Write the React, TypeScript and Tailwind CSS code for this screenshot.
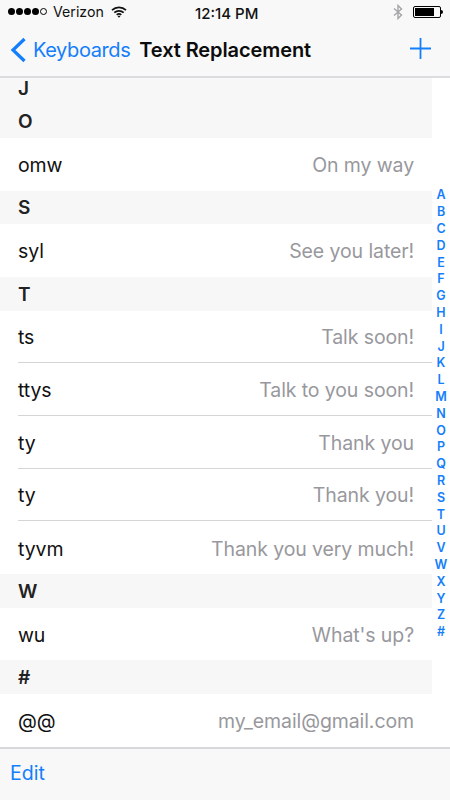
const font = "[font-family:Inter,'Liberation_Sans',sans-serif]";
const letters = "ABCDEFGHIJKLMNOPQRSTUVWXYZ#".split("");

type Section = { h: string; rows: [string, string][] };
const sections: Section[] = [
  { h: "O", rows: [["omw", "On my way"]] },
  { h: "S", rows: [["syl", "See you later!"]] },
  { h: "T", rows: [["ts", "Talk soon!"], ["ttys", "Talk to you soon!"], ["ty", "Thank you"], ["ty", "Thank you!"], ["tyvm", "Thank you very much!"]] },
  { h: "W", rows: [["wu", "What's up?"]] },
  { h: "#", rows: [["@@", "my_email@gmail.com"]] },
];

function Header({ h, tall = true }: { h: string; tall?: boolean }) {
  return (
    <div className={`flex items-center bg-[#f7f7f7] pl-[18px] text-[19px] font-semibold leading-none text-[#222222] ${tall ? "h-[33.6px] pt-[1px]" : "h-[26.4px] pb-[6px]"}`}>
      {h}
    </div>
  );
}

function Row({ k, v, last }: { k: string; v: string; last: boolean }) {
  return (
    <div className="bg-white pl-[18px]">
      <div className={`flex h-[52.7px] items-center justify-between pr-[18px] pt-[3px] ${last ? "" : "border-b border-[#d5d5d8]"}`}>
        <span className="text-[19.5px] tracking-[-0.1px] text-[#111111]">{k}</span>
        <span className="text-[19.5px] tracking-[-0.1px] text-[#98989d]">{v}</span>
      </div>
    </div>
  );
}

export default function App() {
  return (
    <div className={`flex h-[800px] w-[450px] flex-col overflow-hidden bg-white ${font}`}>
      <div className="h-[78px] shrink-0 border-b-2 border-[#dcdcde] bg-[#f8f8f8]">
        <div className="relative flex h-[24px] items-center justify-between pl-[8px] pr-[7px] text-[14.5px] text-[#111111]">
          <div className="flex items-center">
            <div className="flex items-center gap-[1px]">
              {[0, 1, 2, 3].map((i) => (
                <span key={i} className="h-[7px] w-[7px] rounded-full bg-black" />
              ))}
              <span className="h-[7px] w-[7px] rounded-full border border-black" />
            </div>
            <span className="ml-[6px] text-[14.2px]">Verizon</span>
            <svg className="ml-[7px]" width="16" height="12" viewBox="0 0 16 12" fill="none" stroke="#111" strokeWidth="1.7">
              <path d="M1 4.2C5 .4 11 .4 15 4.2" />
              <path d="M3.3 6.6c2.7-2.4 6.7-2.4 9.4 0" />
              <path d="M5.7 8.9c1.4-1.1 3.2-1.1 4.6 0" />
              <path d="M8 11.8 6.6 10.3c.8-.6 2-.6 2.8 0z" fill="#111" stroke="none" />
            </svg>
          </div>
          <span className="absolute left-[195px] top-[3px] text-[15px] font-medium">12:14 PM</span>
          <div className="flex items-center gap-[10px]">
            <svg width="10" height="16" viewBox="0 0 10 16" fill="none" stroke="#a5a5a8" strokeWidth="1.4">
              <path d="M1 4.5 8.5 11 5 14.5V1.5L8.5 5 1 11.5" />
            </svg>
            <div className="flex items-center">
              <div className="h-[12px] w-[28px] rounded-[2px] border border-black p-[1px]">
                <div className="h-full w-[19px] bg-black" />
              </div>
              <div className="h-[4px] w-[2px] rounded-r-sm bg-black" />
            </div>
          </div>
        </div>
        <div className="relative flex h-[52px] items-center">
          <svg className="ml-[10px]" width="17" height="26" viewBox="0 0 17 26" fill="none" stroke="#147efb" strokeWidth="3.2">
            <path d="M14.5 2 3 13l11.5 11" />
          </svg>
          <span className="ml-[6px] text-[20px] tracking-[-0.4px] text-[#147efb]">Keyboards</span>
          <span className="ml-[9px] text-[20px] font-semibold tracking-[-0.1px] text-[#0c0c0c]">Text Replacement</span>
          <svg className="absolute left-[409px] top-[13px]" width="23" height="23" viewBox="0 0 23 23" stroke="#147efb" strokeWidth="1.8">
            <path d="M11.5 1v21M1 11.5h21" />
          </svg>
        </div>
      </div>
      <div className="flex min-h-0 flex-1">
        <div className="w-[432px] shrink-0">
          <Header h="J" tall={false} />
          {sections.map((s) => (
            <div key={s.h}>
              <Header h={s.h} />
              {s.rows.map(([k, v], i) => (
                <Row key={k + v} k={k} v={v} last={i === s.rows.length - 1} />
              ))}
            </div>
          ))}
        </div>
        <div className="flex flex-1 flex-col items-center justify-center pt-[3px]">
          {letters.map((l) => (
            <div key={l} className="flex h-[16.8px] items-center text-[12.5px] font-semibold leading-none text-[#147efb]">
              {l}
            </div>
          ))}
        </div>
      </div>
      <div className="flex h-[53px] shrink-0 items-center border-t-2 border-[#d8d8da] bg-[#f8f8f8] pb-[1px] pl-[10px] text-[19.5px] text-[#147efb]">
        Edit
      </div>
    </div>
  );
}
